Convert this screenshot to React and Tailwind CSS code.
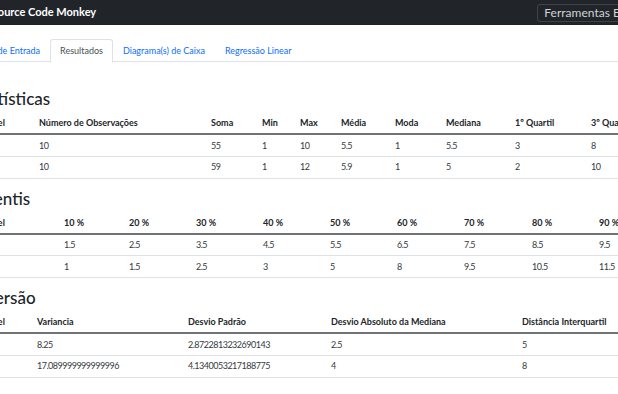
import React from "react";

const stats = {
  cols: [
    ["Variável", "w-[74px]"],
    ["Número de Observações", "w-[172px]"],
    ["Soma", "w-[51px]"],
    ["Min", "w-[38px]"],
    ["Max", "w-[41px]"],
    ["Média", "w-[54px]"],
    ["Moda", "w-[51px]"],
    ["Mediana", "w-[69px]"],
    ["1º Quartil", "w-[76px]"],
    ["3º Quartil", "w-[80px]"],
  ],
  rows: [
    ["x", "10", "55", "1", "10", "5.5", "1", "5.5", "3", "8"],
    ["y", "10", "59", "1", "12", "5.9", "1", "5", "2", "10"],
  ],
};

const percentis = {
  cols: [
    ["Variável", "w-[99px]"],
    ["10 %", "w-[65px]"],
    ["20 %", "w-[67px]"],
    ["30 %", "w-[67px]"],
    ["40 %", "w-[67px]"],
    ["50 %", "w-[67px]"],
    ["60 %", "w-[67px]"],
    ["70 %", "w-[68px]"],
    ["80 %", "w-[67px]"],
    ["90 %", "w-[67px]"],
  ],
  rows: [
    ["x", "1.5", "2.5", "3.5", "4.5", "5.5", "6.5", "7.5", "8.5", "9.5"],
    ["y", "1", "1.5", "2.5", "3", "5", "8", "9.5", "10.5", "11.5"],
  ],
};

const dispersao = {
  cols: [
    ["Variável", "w-[72px]"],
    ["Variancia", "w-[151px]"],
    ["Desvio Padrão", "w-[143px]"],
    ["Desvio Absoluto da Mediana", "w-[191px]"],
    ["Distância Interquartil", "w-[140px]"],
  ],
  rows: [
    ["x", "8.25", "2.8722813232690143", "2.5", "5"],
    ["y", "17.089999999999996", "4.1340053217188775", "4", "8"],
  ],
};

const Section = ({ title, data, titleClass = "-ml-[1px]" }) => (
  <section className="mt-[9px] first:mt-0">
    <h3 className={`${titleClass} text-[17px] leading-[22px] font-medium text-[#212529] mb-[3px]`}>
      {title}
    </h3>
    <table className="table-fixed border-collapse text-[#212529]">
      <thead>
        <tr className="border-b-2 border-[#707375]">
          {data.cols.map(([label, w], j) => (
            <th
              key={label}
              className={`${w} h-[21px] ${j === 0 ? "pl-[11px]" : "pl-[3px]"} pr-[3px] text-left text-[9px] font-bold align-middle whitespace-nowrap`}
            >
              {label}
            </th>
          ))}
        </tr>
      </thead>
      <tbody>
        {data.rows.map((row, i) => (
          <tr key={i} className="border-b border-[#dee2e6]">
            {row.map((cell, j) => (
              <td
                key={j}
                className={`h-[22px] ${j === 0 ? "pl-[11px]" : "pl-[3px]"} pr-[3px] align-middle whitespace-nowrap text-[9px] tracking-[-0.5px] text-[#343a40]`}
              >
                {cell}
              </td>
            ))}
          </tr>
        ))}
      </tbody>
    </table>
  </section>
);

const tabs = [
  { label: "Dados de Entrada" },
  { label: "Resultados", active: true },
  { label: "Diagrama(s) de Caixa" },
  { label: "Regressão Linear" },
];

export default function App() {
  return (
    <div className="w-full min-h-screen overflow-hidden bg-white font-['Lato',sans-serif]">
      <nav className="h-[25px] bg-[#212529] flex items-center justify-between">
        <span className="-ml-[38px] text-[11px] font-bold text-white whitespace-nowrap">
          Open Source Code Monkey
        </span>
        <button className="-mr-[61px] h-[18px] px-[6px] rounded-[3px] border border-[#3f454b] text-[12px] leading-none text-[#cfd3d6] whitespace-nowrap">
          Ferramentas Estatísticas
        </button>
      </nav>

      <div className="mt-[14px] border-b border-[#dee2e6] flex h-[23px] -ml-[40px]">
        {tabs.map((t) =>
          t.active ? (
            <div
              key={t.label}
              className="px-[9px] h-[24px] flex items-center text-[9px] text-[#495057] bg-white border border-[#dee2e6] border-b-white rounded-t-[3px] whitespace-nowrap"
            >
              {t.label}
            </div>
          ) : (
            <div
              key={t.label}
              className="px-[9px] h-[23px] flex items-center text-[9px] text-[#0d6efd] border border-transparent whitespace-nowrap"
            >
              {t.label}
            </div>
          )
        )}
      </div>

      <div className="-ml-[38px] mt-[26px] w-[760px]">
        <Section title="Estatísticas" data={stats} titleClass="ml-[4px]" />
        <Section title="Percentis" data={percentis} />
        <Section title="Dispersão" data={dispersao} />
      </div>
    </div>
  );
}
